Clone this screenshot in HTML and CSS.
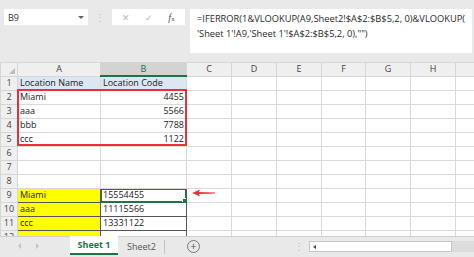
FILE: index.html
```html
<!DOCTYPE html>
<html lang="en">
<head>
    <meta charset="UTF-8">
    <title>VLOOKUP across sheets</title>
    <link rel="stylesheet" href="styles.css">
</head>
<body>
    <div class="window">
        <div class="formula-bar">
            <div class="name-box">
                <span>B9</span>
                <span class="caret"></span>
            </div>
            <div class="grip">⋮</div>
            <div class="fx-buttons">
                <span class="btn">✕</span>
                <span class="btn">✓</span>
                <span class="btn fx"><i>f</i><small>x</small></span>
            </div>
            <div class="formula">=IFERROR(1&amp;VLOOKUP(A9,Sheet2!$A$2:$B$5,2, 0)&amp;VLOOKUP(<br>'Sheet 1'!A9,'Sheet 1'!$A$2:$B$5,2, 0),"")</div>
        </div>

        <div class="sheet">
            <table class="grid">
                <colgroup>
                    <col class="c-row"><col class="c-a"><col class="c-b">
                    <col class="c-n"><col class="c-n"><col class="c-n"><col class="c-f">
                    <col class="c-n"><col class="c-n"><col class="c-last">
                </colgroup>
                <tr class="head">
                    <th class="corner"><span class="tri"></span></th>
                    <th>A</th><th class="sel">B</th><th>C</th><th>D</th><th>E</th><th>F</th><th>G</th><th>H</th><th></th>
                </tr>
                <tr><th>1</th><td class="title">Location Name</td><td class="title">Location Code</td><td></td><td></td><td></td><td></td><td></td><td></td><td></td></tr>
                <tr><th>2</th><td>Miami</td><td class="num">4455</td><td></td><td></td><td></td><td></td><td></td><td></td><td></td></tr>
                <tr><th>3</th><td>aaa</td><td class="num">5566</td><td></td><td></td><td></td><td></td><td></td><td></td><td></td></tr>
                <tr><th>4</th><td>bbb</td><td class="num">7788</td><td></td><td></td><td></td><td></td><td></td><td></td><td></td></tr>
                <tr><th>5</th><td>ccc</td><td class="num">1122</td><td></td><td></td><td></td><td></td><td></td><td></td><td></td></tr>
                <tr><th>6</th><td></td><td></td><td></td><td></td><td></td><td></td><td></td><td></td><td></td></tr>
                <tr><th>7</th><td></td><td></td><td></td><td></td><td></td><td></td><td></td><td></td><td></td></tr>
                <tr><th>8</th><td></td><td></td><td></td><td></td><td></td><td></td><td></td><td></td><td></td></tr>
                <tr><th class="sel-row">9</th><td class="key">Miami</td><td class="out active">15554455</td><td></td><td></td><td></td><td></td><td></td><td></td><td></td></tr>
                <tr><th>10</th><td class="key">aaa</td><td class="out">11115566</td><td></td><td></td><td></td><td></td><td></td><td></td><td></td></tr>
                <tr><th>11</th><td class="key">ccc</td><td class="out">13331122</td><td></td><td></td><td></td><td></td><td></td><td></td><td></td></tr>
                <tr><th>12</th><td class="key"></td><td class="out"></td><td></td><td></td><td></td><td></td><td></td><td></td><td></td></tr>
            </table>
            <div class="red-box"></div>
            <svg class="arrow" width="24" height="8" viewBox="0 0 24 8">
                <path d="M0 4 L8 0.5 L7 3 L23 3.4 L23 4.6 L7 5 L8 7.5 Z" fill="#f0343c"/>
            </svg>
        </div>

        <div class="tab-bar">
            <div class="nav">
                <span class="nav-left"></span>
                <span class="nav-right"></span>
            </div>
            <div class="tab active">Sheet 1</div>
            <div class="tab">Sheet2</div>
            <div class="add">+</div>
            <div class="grip small">⋮</div>
            <div class="scroll">
                <span class="scroll-left"></span>
            </div>
            <div class="corner-box"></div>
        </div>
    </div>
</body>
</html>
```

FILE: styles.css
```css
* {
    margin: 0;
    padding: 0;
    box-sizing: border-box;
}

body {
    font-family: 'Open Sans', 'Liberation Sans', sans-serif;
    background: #fff;
    color: #222;
}

.window {
    width: 474px;
    height: 257px;
    overflow: hidden;
    display: flex;
    flex-direction: column;
}

/* Formula bar */
.formula-bar {
    height: 62px;
    flex: none;
    background: #e9e9e9;
    display: flex;
    align-items: flex-start;
    padding: 9px 2px 0 4px;
}

.name-box {
    width: 84px;
    height: 16px;
    background: #fff;
    display: flex;
    align-items: center;
    justify-content: space-between;
    padding: 0 4px 0 4px;
    font-size: 9px;
    color: #333;
}

.caret {
    width: 0;
    height: 0;
    border-left: 3px solid transparent;
    border-right: 3px solid transparent;
    border-top: 3px solid #666;
}

.grip {
    width: 24px;
    height: 16px;
    text-align: center;
    color: #c0c0c0;
    font-size: 10px;
    line-height: 16px;
}

.fx-buttons {
    width: 73px;
    height: 16px;
    background: #fff;
    display: flex;
    align-items: center;
    justify-content: space-around;
    padding: 0 2px;
}

.btn {
    font-size: 9px;
    color: #b5b5b5;
    width: 20px;
    text-align: center;
}

.btn.fx {
    color: #555;
    font-family: 'Liberation Serif', serif;
    font-size: 10px;
}

.btn.fx small {
    font-size: 7px;
}

.formula {
    flex: 1;
    height: 44px;
    margin-left: 5px;
    background: #fff;
    font-size: 9.3px;
    line-height: 15px;
    padding: 2px 0 0 7px;
    color: #2a2a2a;
    white-space: nowrap;
    overflow: hidden;
}

/* Sheet grid */
.sheet {
    position: relative;
    height: 174px;
    flex: none;
    overflow: hidden;
}

.grid {
    border-collapse: collapse;
    table-layout: fixed;
    width: 515px;
    font-size: 9px;
}

.c-row { width: 17px; }
.c-a { width: 83px; }
.c-b { width: 86px; }
.c-n { width: 45px; }
.c-f { width: 44px; }
.c-last { width: 60px; }

.grid tr {
    height: 14px;
}

.grid tr.head {
    height: 13px;
}

.grid th {
    background: #efefef;
    color: #444;
    font-weight: normal;
    border: 1px solid #d6d6d6;
    text-align: center;
    padding: 0;
    line-height: 12px;
}

.grid td {
    border: 1px solid #dadada;
    padding: 0 2px;
    white-space: nowrap;
    overflow: hidden;
    line-height: 12px;
    color: #222;
}

.grid th.corner {
    position: relative;
}

.tri {
    position: absolute;
    right: 2px;
    bottom: 2px;
    width: 0;
    height: 0;
    border-left: 6px solid transparent;
    border-bottom: 6px solid #bdbdbd;
}

.grid th.sel {
    background: #d3d3d3;
    border-bottom: 2px solid #217346;
    color: #217346;
}

.grid td.title {
    background: #dde6f3;
}

.grid td.num {
    text-align: right;
}

.grid td.key {
    background: #ffff00;
    border-color: #555;
}

.grid td.out {
    border-color: #555;
}

.grid td.active {
    position: relative;
    box-shadow: inset 0 0 0 1px #217346;
    border: 1px solid #217346;
}

.grid td.active::after {
    content: '';
    position: absolute;
    right: -3px;
    bottom: -3px;
    width: 5px;
    height: 5px;
    background: #217346;
    border: 1px solid #fff;
}

.red-box {
    position: absolute;
    left: 17px;
    top: 27px;
    width: 170px;
    height: 57px;
    border: 2px solid #e8303a;
}

.arrow {
    position: absolute;
    left: 192px;
    top: 127px;
}

/* Sheet tabs */
.tab-bar {
    flex: 1;
    background: #e9e9e9;
    display: flex;
    align-items: flex-start;
    border-top: 1px solid #d0d0d0;
}

.nav {
    width: 70px;
    height: 18px;
    display: flex;
    align-items: center;
    padding-left: 18px;
    gap: 15px;
}

.nav-left,
.nav-right {
    width: 0;
    height: 0;
    border-top: 3px solid transparent;
    border-bottom: 3px solid transparent;
}

.nav-left { border-right: 3px solid #c4c4c4; }
.nav-right { border-left: 3px solid #c4c4c4; }

.tab {
    padding: 0 8px 0 9px;
    font-size: 9px;
    color: #555;
    border-right: 1px solid #c4c4c4;
    height: 14px;
    line-height: 14px;
    margin-top: 3px;
}

.tab.active {
    background: #fff;
    color: #217346;
    font-weight: bold;
    width: 48px;
    text-align: center;
    padding: 0;
    height: 19px;
    line-height: 18px;
    margin-top: -1px;
    border-right: none;
    border-bottom: 2px solid #217346;
}

.add {
    width: 13px;
    height: 13px;
    margin: 3px 0 0 22px;
    border: 1px solid #777;
    border-radius: 50%;
    font-size: 11px;
    line-height: 10px;
    text-align: center;
    color: #555;
}

.grip.small {
    width: 20px;
    margin-left: 89px;
    height: 18px;
    line-height: 18px;
}

.scroll {
    width: 143px;
    height: 11px;
    margin-top: 4px;
    background: #fff;
    border: 1px solid #c6c6c6;
    display: flex;
    align-items: center;
    padding-left: 3px;
}

.scroll-left {
    width: 0;
    height: 0;
    border-top: 2px solid transparent;
    border-bottom: 2px solid transparent;
    border-right: 3px solid #444;
}

.corner-box {
    flex: 1;
    height: 11px;
    margin-top: 4px;
    background: #dcdcdc;
}
```
